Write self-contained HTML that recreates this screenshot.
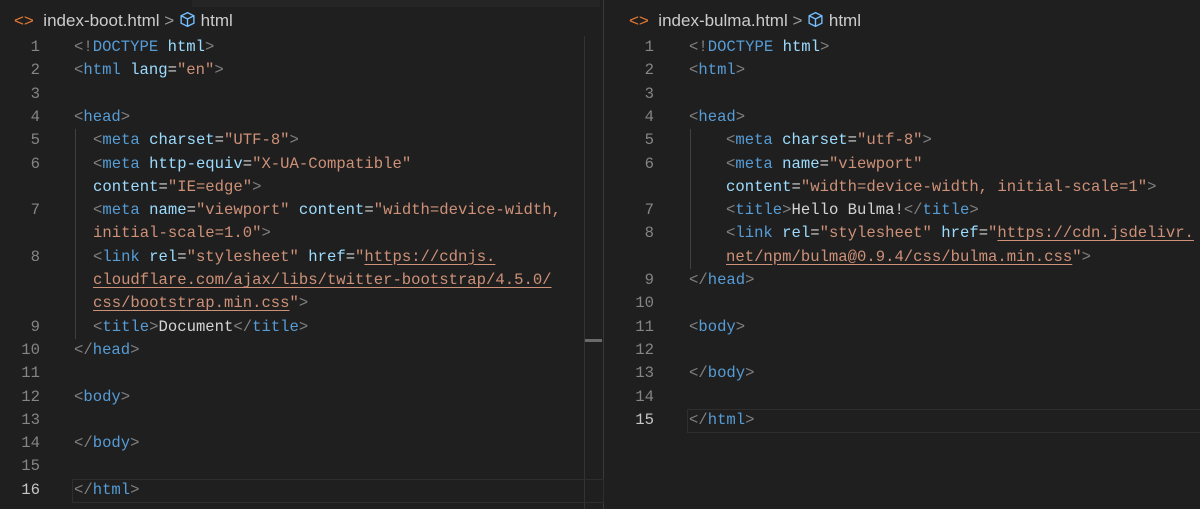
<html><head><style>
body{margin:0;width:1200px;height:509px;background:#1f1f1f;overflow:hidden;position:relative;font-family:"Liberation Mono","DejaVu Sans Mono",monospace;font-size:15.6px}
.bc{position:absolute;top:11px;font-family:"Liberation Sans",sans-serif;font-size:17px;color:#cccccc;white-space:nowrap}
.row{position:absolute;height:23.3px;line-height:23.3px;white-space:pre;color:#d4d4d4}
.ln{position:absolute;text-align:right;width:40px;color:#858585;line-height:23.3px;height:23.3px}
.p{color:#808080}.t{color:#569cd6}.a{color:#9cdcfe}.s{color:#ce9178}.u{text-decoration:underline;text-underline-offset:3px}
.guide{position:absolute;width:1px;background:#404040}
</style></head><body>
<div style="position:absolute;left:192px;top:0;width:408px;height:7px;background:#252526"></div>
<div style="position:absolute;left:603px;top:0;width:1px;height:509px;background:#3a3a3a"></div>
<div style="position:absolute;left:584px;top:36px;width:1px;height:473px;background:#333"></div>
<div style="position:absolute;left:585px;top:339px;width:17px;height:3px;background:#6a6a6a"></div>

<div class="bc" style="left:14px"><span style="color:#e37933">&lt;&gt;</span>&nbsp; index-boot.html <span style="color:#999">&gt;</span> <svg width="17" height="17" viewBox="0 0 16 16" style="vertical-align:-2px"><path d="M8 1.5 14 4.5v7L8 14.5 2 11.5v-7zM2 4.5 8 7.5 14 4.5M8 7.5v7" fill="none" stroke="#75beff" stroke-width="1.3"/></svg> html</div>
<div class="bc" style="left:629px"><span style="color:#e37933">&lt;&gt;</span>&nbsp; index-bulma.html <span style="color:#999">&gt;</span> <svg width="17" height="17" viewBox="0 0 16 16" style="vertical-align:-2px"><path d="M8 1.5 14 4.5v7L8 14.5 2 11.5v-7zM2 4.5 8 7.5 14 4.5M8 7.5v7" fill="none" stroke="#75beff" stroke-width="1.3"/></svg> html</div>

<div style="position:absolute;left:72px;top:479px;width:530px;height:22px;border:1px solid #2e2e2e"></div>
<div style="position:absolute;left:687px;top:409px;width:513px;height:22px;border:1px solid #2e2e2e"></div>
<div class="guide" style="left:75px;top:129px;height:210px"></div>
<div class="guide" style="left:690px;top:129px;height:140px"></div>

<div class="ln" style="left:0;top:36px">1</div><div class="row" style="left:74px;top:36px"><span class="p">&lt;!</span><span class="t">DOCTYPE</span> <span class="a">html</span><span class="p">&gt;</span></div>
<div class="ln" style="left:0;top:59.3px">2</div><div class="row" style="left:74px;top:59.3px"><span class="p">&lt;</span><span class="t">html</span> <span class="a">lang</span>=<span class="s">"en"</span><span class="p">&gt;</span></div>
<div class="ln" style="left:0;top:82.6px">3</div>
<div class="ln" style="left:0;top:105.9px">4</div><div class="row" style="left:74px;top:105.9px"><span class="p">&lt;</span><span class="t">head</span><span class="p">&gt;</span></div>
<div class="ln" style="left:0;top:129.2px">5</div><div class="row" style="left:93px;top:129.2px"><span class="p">&lt;</span><span class="t">meta</span> <span class="a">charset</span>=<span class="s">"UTF-8"</span><span class="p">&gt;</span></div>
<div class="ln" style="left:0;top:152.5px">6</div><div class="row" style="left:93px;top:152.5px"><span class="p">&lt;</span><span class="t">meta</span> <span class="a">http-equiv</span>=<span class="s">"X-UA-Compatible"</span></div>
<div class="row" style="left:93px;top:175.8px"><span class="a">content</span>=<span class="s">"IE=edge"</span><span class="p">&gt;</span></div>
<div class="ln" style="left:0;top:199.1px">7</div><div class="row" style="left:93px;top:199.1px"><span class="p">&lt;</span><span class="t">meta</span> <span class="a">name</span>=<span class="s">"viewport"</span> <span class="a">content</span>=<span class="s">"width=device-width,</span></div>
<div class="row" style="left:93px;top:222.4px"><span class="s">initial-scale=1.0"</span><span class="p">&gt;</span></div>
<div class="ln" style="left:0;top:245.7px">8</div><div class="row" style="left:93px;top:245.7px"><span class="p">&lt;</span><span class="t">link</span> <span class="a">rel</span>=<span class="s">"stylesheet"</span> <span class="a">href</span>=<span class="s">"<span class="u">https://cdnjs.</span></span></div>
<div class="row" style="left:93px;top:269px"><span class="s u">cloudflare.com/ajax/libs/twitter-bootstrap/4.5.0/</span></div>
<div class="row" style="left:93px;top:292.3px"><span class="s"><span class="u">css/bootstrap.min.css</span>"</span><span class="p">&gt;</span></div>
<div class="ln" style="left:0;top:315.6px">9</div><div class="row" style="left:93px;top:315.6px"><span class="p">&lt;</span><span class="t">title</span><span class="p">&gt;</span>Document<span class="p">&lt;/</span><span class="t">title</span><span class="p">&gt;</span></div>
<div class="ln" style="left:0;top:338.9px">10</div><div class="row" style="left:74px;top:338.9px"><span class="p">&lt;/</span><span class="t">head</span><span class="p">&gt;</span></div>
<div class="ln" style="left:0;top:362.2px">11</div>
<div class="ln" style="left:0;top:385.5px">12</div><div class="row" style="left:74px;top:385.5px"><span class="p">&lt;</span><span class="t">body</span><span class="p">&gt;</span></div>
<div class="ln" style="left:0;top:408.8px">13</div>
<div class="ln" style="left:0;top:432.1px">14</div><div class="row" style="left:74px;top:432.1px"><span class="p">&lt;/</span><span class="t">body</span><span class="p">&gt;</span></div>
<div class="ln" style="left:0;top:455.4px">15</div>
<div class="ln" style="left:0;top:478.7px;color:#c6c6c6">16</div><div class="row" style="left:74px;top:478.7px"><span class="p">&lt;/</span><span class="t">html</span><span class="p">&gt;</span></div>

<div class="ln" style="left:614px;top:36px">1</div><div class="row" style="left:689px;top:36px"><span class="p">&lt;!</span><span class="t">DOCTYPE</span> <span class="a">html</span><span class="p">&gt;</span></div>
<div class="ln" style="left:614px;top:59.3px">2</div><div class="row" style="left:689px;top:59.3px"><span class="p">&lt;</span><span class="t">html</span><span class="p">&gt;</span></div>
<div class="ln" style="left:614px;top:82.6px">3</div>
<div class="ln" style="left:614px;top:105.9px">4</div><div class="row" style="left:689px;top:105.9px"><span class="p">&lt;</span><span class="t">head</span><span class="p">&gt;</span></div>
<div class="ln" style="left:614px;top:129.2px">5</div><div class="row" style="left:726px;top:129.2px"><span class="p">&lt;</span><span class="t">meta</span> <span class="a">charset</span>=<span class="s">"utf-8"</span><span class="p">&gt;</span></div>
<div class="ln" style="left:614px;top:152.5px">6</div><div class="row" style="left:726px;top:152.5px"><span class="p">&lt;</span><span class="t">meta</span> <span class="a">name</span>=<span class="s">"viewport"</span></div>
<div class="row" style="left:726px;top:175.8px"><span class="a">content</span>=<span class="s">"width=device-width, initial-scale=1"</span><span class="p">&gt;</span></div>
<div class="ln" style="left:614px;top:199.1px">7</div><div class="row" style="left:726px;top:199.1px"><span class="p">&lt;</span><span class="t">title</span><span class="p">&gt;</span>Hello Bulma!<span class="p">&lt;/</span><span class="t">title</span><span class="p">&gt;</span></div>
<div class="ln" style="left:614px;top:222.4px">8</div><div class="row" style="left:726px;top:222.4px"><span class="p">&lt;</span><span class="t">link</span> <span class="a">rel</span>=<span class="s">"stylesheet"</span> <span class="a">href</span>=<span class="s">"<span class="u">https://cdn.jsdelivr.</span></span></div>
<div class="row" style="left:726px;top:245.7px"><span class="s"><span class="u">net/npm/bulma@0.9.4/css/bulma.min.css</span>"</span><span class="p">&gt;</span></div>
<div class="ln" style="left:614px;top:269px">9</div><div class="row" style="left:689px;top:269px"><span class="p">&lt;/</span><span class="t">head</span><span class="p">&gt;</span></div>
<div class="ln" style="left:614px;top:292.3px">10</div>
<div class="ln" style="left:614px;top:315.6px">11</div><div class="row" style="left:689px;top:315.6px"><span class="p">&lt;</span><span class="t">body</span><span class="p">&gt;</span></div>
<div class="ln" style="left:614px;top:338.9px">12</div>
<div class="ln" style="left:614px;top:362.2px">13</div><div class="row" style="left:689px;top:362.2px"><span class="p">&lt;/</span><span class="t">body</span><span class="p">&gt;</span></div>
<div class="ln" style="left:614px;top:385.5px">14</div>
<div class="ln" style="left:614px;top:408.8px;color:#c6c6c6">15</div><div class="row" style="left:689px;top:408.8px"><span class="p">&lt;/</span><span class="t">html</span><span class="p">&gt;</span></div>
</body></html>
